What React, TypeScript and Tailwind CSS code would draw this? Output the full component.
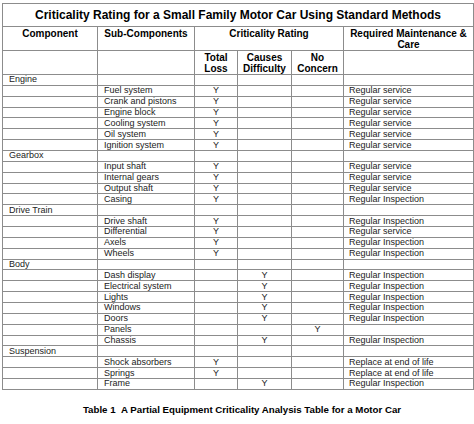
import React from "react";

type Row = { name: string; t?: boolean; c?: boolean; n?: boolean; care?: string };
type Group = { name: string; rows: Row[] };

const RS = "Regular service";
const RI = "Regular Inspection";
const RE = "Replace at end of life";

const groups: Group[] = [
  {
    name: "Engine",
    rows: [
      { name: "Fuel system", t: true, care: RS },
      { name: "Crank and pistons", t: true, care: RS },
      { name: "Engine block", t: true, care: RS },
      { name: "Cooling system", t: true, care: RS },
      { name: "Oil system", t: true, care: RS },
      { name: "Ignition system", t: true, care: RS },
    ],
  },
  {
    name: "Gearbox",
    rows: [
      { name: "Input shaft", t: true, care: RS },
      { name: "Internal gears", t: true, care: RS },
      { name: "Output shaft", t: true, care: RS },
      { name: "Casing", t: true, care: RI },
    ],
  },
  {
    name: "Drive Train",
    rows: [
      { name: "Drive shaft", t: true, care: RI },
      { name: "Differential", t: true, care: RS },
      { name: "Axels", t: true, care: RI },
      { name: "Wheels", t: true, care: RI },
    ],
  },
  {
    name: "Body",
    rows: [
      { name: "Dash display", c: true, care: RI },
      { name: "Electrical system", c: true, care: RI },
      { name: "Lights", c: true, care: RI },
      { name: "Windows", c: true, care: RI },
      { name: "Doors", c: true, care: RI },
      { name: "Panels", n: true },
      { name: "Chassis", c: true, care: RI },
    ],
  },
  {
    name: "Suspension",
    rows: [
      { name: "Shock absorbers", t: true, care: RE },
      { name: "Springs", t: true, care: RE },
      { name: "Frame", c: true, care: RI },
    ],
  },
];

const cell = "border border-[#8c8c8c] p-0 leading-[9px] text-[9px] text-[#222]";
const hcell = "border border-[#8c8c8c] p-0 text-[10px] font-bold text-black leading-[11px]";

export default function App() {
  return (
    <div
      className="w-[474px] h-[424px] bg-white pt-[3px] pl-[2px]"
      style={{ fontFamily: '"Liberation Sans", Arial, sans-serif' }}
    >
      <table className="table-fixed border-collapse w-[471px]">
        <colgroup>
          <col className="w-[95px]" />
          <col className="w-[97px]" />
          <col className="w-[43px]" />
          <col className="w-[54px]" />
          <col className="w-[52px]" />
          <col className="w-[130px]" />
        </colgroup>
        <tbody>
          <tr className="h-[23px]">
            <td colSpan={6} className="border border-[#8c8c8c] p-0 text-center text-[12px] font-bold text-black align-middle">
              Criticality Rating for a Small Family Motor Car Using Standard Methods
            </td>
          </tr>
          <tr className="h-[24px]">
            <td className={`${hcell} text-center align-top pt-[1px]`}>Component</td>
            <td className={`${hcell} text-center align-top pt-[1px]`}>Sub-Components</td>
            <td colSpan={3} className={`${hcell} text-center align-top pt-[1px]`}>Criticality Rating</td>
            <td className={`${hcell} text-center align-top pt-[1px]`}>
              Required Maintenance &amp;
              <br />
              Care
            </td>
          </tr>
          <tr className="h-[24px]">
            <td className={hcell}></td>
            <td className={hcell}></td>
            <td className={`${hcell} text-center align-middle`}>
              Total
              <br />
              Loss
            </td>
            <td className={`${hcell} text-center align-middle`}>
              Causes
              <br />
              Difficulty
            </td>
            <td className={`${hcell} text-center align-middle`}>
              No
              <br />
              Concern
            </td>
            <td className={hcell}></td>
          </tr>
          {groups.map((g) => (
            <React.Fragment key={g.name}>
              <tr className="h-[10.86px]">
                <td className={`${cell} pl-[6px]`}>{g.name}</td>
                <td className={cell}></td>
                <td className={cell}></td>
                <td className={cell}></td>
                <td className={cell}></td>
                <td className={cell}></td>
              </tr>
              {g.rows.map((r) => (
                <tr key={r.name} className="h-[10.86px]">
                  <td className={cell}></td>
                  <td className={`${cell} pl-[6px]`}>{r.name}</td>
                  <td className={`${cell} text-center`}>{r.t ? "Y" : ""}</td>
                  <td className={`${cell} text-center`}>{r.c ? "Y" : ""}</td>
                  <td className={`${cell} text-center`}>{r.n ? "Y" : ""}</td>
                  <td className={`${cell} pl-[5px]`}>{r.care ?? ""}</td>
                </tr>
              ))}
            </React.Fragment>
          ))}
        </tbody>
      </table>
      <div className="mt-[14px] pl-[8px] w-[472px] text-center text-[9.7px] font-bold text-black leading-[12px]">
        Table 1&nbsp;&nbsp;A Partial Equipment Criticality Analysis Table for a Motor Car
      </div>
    </div>
  );
}
